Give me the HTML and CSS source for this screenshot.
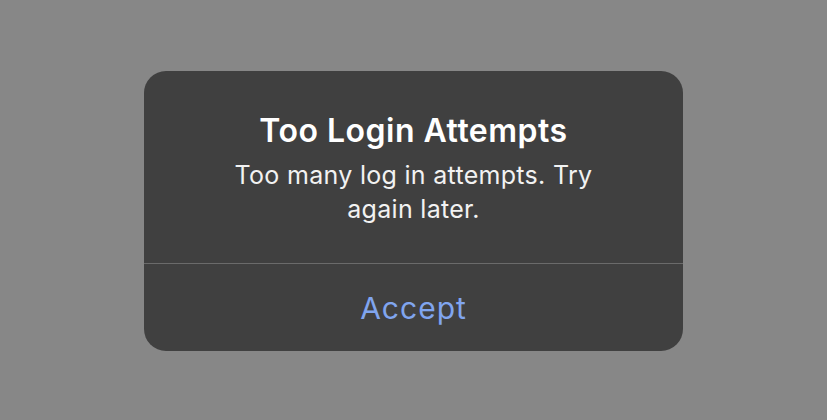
FILE: index.html
```html
<!DOCTYPE html>
<html>
<head>
<meta charset="utf-8">
<link rel="stylesheet" href="styles.css">
</head>
<body>
<div class="screen">
  <div class="alert">
    <div class="alert-body">
      <div class="alert-title">Too Login Attempts</div>
      <div class="alert-message">Too many log in attempts. Try again later.</div>
    </div>
    <div class="alert-actions">
      <button class="alert-button">Accept</button>
    </div>
  </div>
</div>
</body>
</html>
```
FILE: styles.css
```css
html, body {
  margin: 0;
  padding: 0;
  background: #878787;
}
.screen {
  width: 827px;
  height: 420px;
  display: flex;
  align-items: center;
  justify-content: center;
  font-family: Inter, "Noto Sans", sans-serif;
}
.alert {
  width: 539px;
  height: 280px;
  margin-top: 1px;
  background: #404040;
  border-radius: 22px;
  display: flex;
  flex-direction: column;
  overflow: hidden;
}
.alert-body {
  height: 193px;
  box-sizing: border-box;
  padding-top: 40px;
  display: flex;
  flex-direction: column;
  align-items: center;
  border-bottom: 1px solid #6b6b6b;
}
.alert-title {
  color: #ffffff;
  font-size: 32px;
  font-weight: 600;
  line-height: 40px;
  letter-spacing: 0.5px;
}
.alert-message {
  color: #f2f2f2;
  font-size: 25px;
  line-height: 34px;
  letter-spacing: 0.3px;
  text-align: center;
  max-width: 400px;
  margin-top: 7px;
}
.alert-actions {
  flex: 1;
  display: flex;
  align-items: center;
  justify-content: center;
  padding-top: 2px;
}
.alert-button {
  background: none;
  border: none;
  padding: 0;
  font-family: inherit;
  font-size: 30px;
  letter-spacing: 1px;
  color: #80a5ef;
  cursor: pointer;
}
```
